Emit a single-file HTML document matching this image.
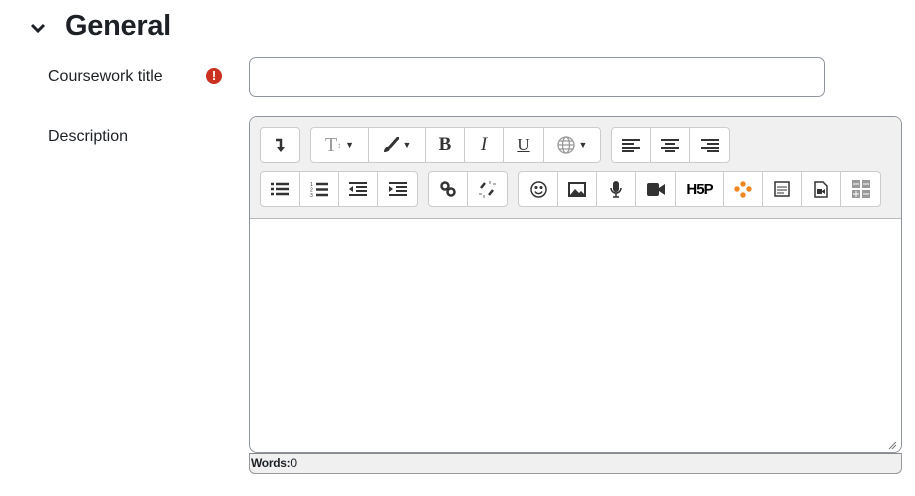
<!DOCTYPE html>
<html><head><meta charset="utf-8"><style>
*{box-sizing:border-box;margin:0;padding:0}
body{width:915px;height:496px;background:#fff;font-family:"Liberation Sans",sans-serif;color:#1d2125;position:relative;overflow:hidden}
.a{position:absolute}
.g{position:absolute;border:1px solid #ccc;border-radius:4px;background:#fff;display:flex}
.b{height:100%;border-right:1px solid #ccc;display:flex;align-items:center;justify-content:center;color:#333}
.b:last-child{border-right:none}
svg{display:block}
.dd{font-size:9px;margin-left:4px;color:#333}
</style></head><body>
<svg class="a" style="left:30px;top:22px" width="16" height="12" viewBox="0 0 16 12"><path d="M2 3l6 6 6-6" stroke="#1d2125" stroke-width="3" fill="none"/></svg>
<div class="a" style="left:65px;top:10px;font-size:29px;font-weight:bold;letter-spacing:-0.3px">General</div>
<div class="a" style="left:48px;top:68px;font-size:16px">Coursework title</div>
<div class="a" style="left:206px;top:68px;width:16px;height:16px;border-radius:50%;background:#ca3120;color:#fff;font-size:13px;font-weight:bold;text-align:center;line-height:16px">!</div>
<div class="a" style="left:249px;top:57px;width:576px;height:40px;border:1px solid #8f959e;border-radius:7px"></div>
<div class="a" style="left:48px;top:128px;font-size:16px">Description</div>
<div class="a" style="left:249px;top:116px;width:653px;height:337px;border:1px solid #8f959e;border-radius:8px;overflow:hidden;background:#fff">
<div style="height:102px;background:#f0f0f0;border-bottom:1px solid #bbb"></div></div>
<svg class="a" style="left:888px;top:441px" width="9" height="9"><path d="M1 8l7-7M4 8l4-4" stroke="#777"/></svg>
<div class="a" style="left:249px;top:453px;width:653px;height:21px;background:#f0f0f0;border:1px solid #999;border-top:1px solid #888;border-radius:0 0 6px 6px;font-size:12px;padding-left:1px;line-height:18px;letter-spacing:-0.3px"><b>Words:</b>0</div>

<div class="g" style="left:260px;top:127px;width:40px;height:36px"><div class="b" style="width:39px"><svg width="10" height="14"><path d="M1 2h5v9" stroke="#333" stroke-width="2.5" fill="none"/><path d="M2 9h8l-4 5z" fill="#333"/></svg></div></div>
<div class="g" style="left:310px;top:127px;width:291px;height:36px">
<div class="b" style="width:58px;color:#999;font-family:'Liberation Serif';font-size:20px">T<span style="font-size:8px;color:#999">↕</span><span class="dd">▼</span></div>
<div class="b" style="width:57px"><svg width="16" height="16"><path d="M15 1L7 10" stroke="#333" stroke-width="3" stroke-linecap="round"/><path d="M6 10c-3-1-5 2-5 5 3 0 6-1 6-4z" fill="#333"/></svg><span class="dd">▼</span></div>
<div class="b" style="width:39px;font-family:'Liberation Serif';font-weight:bold;font-size:19px">B</div>
<div class="b" style="width:39px;font-family:'Liberation Serif';font-style:italic;font-size:19px">I</div>
<div class="b" style="width:40px;font-family:'Liberation Serif';text-decoration:underline;font-size:17px">U</div>
<div class="b" style="width:56px"><svg width="18" height="18" fill="none" stroke="#999" stroke-width="1.3"><circle cx="9" cy="9" r="8"/><ellipse cx="9" cy="9" rx="3.5" ry="8"/><path d="M1 9h16M2.5 5h13M2.5 13h13"/></svg><span class="dd">▼</span></div>
</div>
<div class="g" style="left:611px;top:127px;width:119px;height:36px">
<div class="b" style="width:39px"><svg width="18" height="14"><path d="M0 2h18M0 6h12M0 10h18M0 13h12" stroke="#333" stroke-width="2"/></svg></div>
<div class="b" style="width:39px"><svg width="18" height="14"><path d="M0 2h18M4 6h10M0 10h18M4 13h10" stroke="#333" stroke-width="2"/></svg></div>
<div class="b" style="width:39px"><svg width="18" height="14"><path d="M0 2h18M6 6h12M0 10h18M6 13h12" stroke="#333" stroke-width="2"/></svg></div>
</div>
<div class="g" style="left:260px;top:171px;width:158px;height:36px">
<div class="b" style="width:39px"><svg width="18" height="14"><path d="M5 2h13M5 7h13M5 12h13M0 2h3M0 7h3M0 12h3" stroke="#333" stroke-width="2.5"/></svg></div>
<div class="b" style="width:39px"><svg width="18" height="17"><path d="M6 3h12M6 8.5h12M6 14h12" stroke="#333" stroke-width="2.5"/><text x="0" y="5" font-size="5" fill="#333">1</text><text x="0" y="10.5" font-size="5" fill="#333">2</text><text x="0" y="16" font-size="5" fill="#333">3</text></svg></div>
<div class="b" style="width:39px"><svg width="18" height="14"><path d="M0 1h18M7 5h11M7 9h11M0 13h18" stroke="#333" stroke-width="2"/><path d="M4 4l-4 3 4 3z" fill="#333"/></svg></div>
<div class="b" style="width:39px"><svg width="18" height="14"><path d="M0 1h18M7 5h11M7 9h11M0 13h18" stroke="#333" stroke-width="2"/><path d="M0 4l4 3-4 3z" fill="#333"/></svg></div>
</div>
<div class="g" style="left:428px;top:171px;width:80px;height:36px">
<div class="b" style="width:39px"><svg width="16" height="16"><circle cx="5" cy="5" r="3.5" stroke="#333" stroke-width="2.5" fill="none"/><circle cx="11" cy="11" r="3.5" stroke="#333" stroke-width="2.5" fill="none"/></svg></div>
<div class="b" style="width:40px"><svg width="18" height="18"><path d="M3 8l4-5M15 10l-4 5" stroke="#333" stroke-width="2.5"/><path d="M12 1v3M15 4h3M1 14h3M6 15v3" stroke="#666"/></svg></div>
</div>
<div class="g" style="left:518px;top:171px;width:363px;height:36px">
<div class="b" style="width:39px"><svg width="17" height="17" fill="none" stroke="#333" stroke-width="1.5"><circle cx="8.5" cy="8.5" r="7.5"/><path d="M5 10.5a4 4 0 0 0 7 0"/><circle cx="6" cy="6.5" r=".8" fill="#333"/><circle cx="11" cy="6.5" r=".8" fill="#333"/></svg></div>
<div class="b" style="width:39px"><svg width="18" height="15"><rect x="1" y="1" width="16" height="13" stroke="#333" stroke-width="2" fill="none"/><path d="M2 13l5-6 4 4 2-2 4 4z" fill="#333"/></svg></div>
<div class="b" style="width:39px"><svg width="12" height="17"><rect x="3" y="0" width="6" height="11" rx="3" fill="#333"/><path d="M1 7a5 5 0 0 0 10 0M6 12v4M3 16h6" stroke="#333" stroke-width="1.5" fill="none"/></svg></div>
<div class="b" style="width:40px"><svg width="18" height="13"><rect x="0" y="0" width="12" height="13" rx="2" fill="#333"/><path d="M12 5l6-4v11l-6-4z" fill="#333"/></svg></div>
<div class="b" style="width:48px;font-weight:bold;font-size:15px;letter-spacing:-1px;color:#000">H5P</div>
<div class="b" style="width:39px"><svg width="18" height="18"><circle cx="9" cy="4" r="2.7" fill="#f0861f"/><circle cx="3" cy="9" r="2.7" fill="#f0861f"/><circle cx="15" cy="9" r="2.7" fill="#f0861f"/><circle cx="9" cy="15" r="2.7" fill="#f0861f"/></svg></div>
<div class="b" style="width:39px"><svg width="16" height="16"><rect x="1" y="1" width="14" height="14" stroke="#333" stroke-width="1.5" fill="none"/><path d="M3 6h10M3 9h10M3 12h7" stroke="#333"/></svg></div>
<div class="b" style="width:39px"><svg width="14" height="17"><path d="M1 1h8l4 4v11H1z" stroke="#333" stroke-width="1.5" fill="none"/><rect x="3" y="8" width="5" height="5" fill="#333"/><path d="M8 10l3-2v5l-3-2z" fill="#333"/></svg></div>
<div class="b" style="width:39px"><svg width="18" height="18"><rect x="0" y="0" width="8" height="8" fill="#999"/><rect x="10" y="0" width="8" height="8" fill="#999"/><rect x="0" y="10" width="8" height="8" fill="#999"/><rect x="10" y="10" width="8" height="8" fill="#999"/><path d="M1 4h6M11 4h6M11 14h6M4 11v6M1 14h6" stroke="#fff"/></svg></div>
</div>
</body></html>
